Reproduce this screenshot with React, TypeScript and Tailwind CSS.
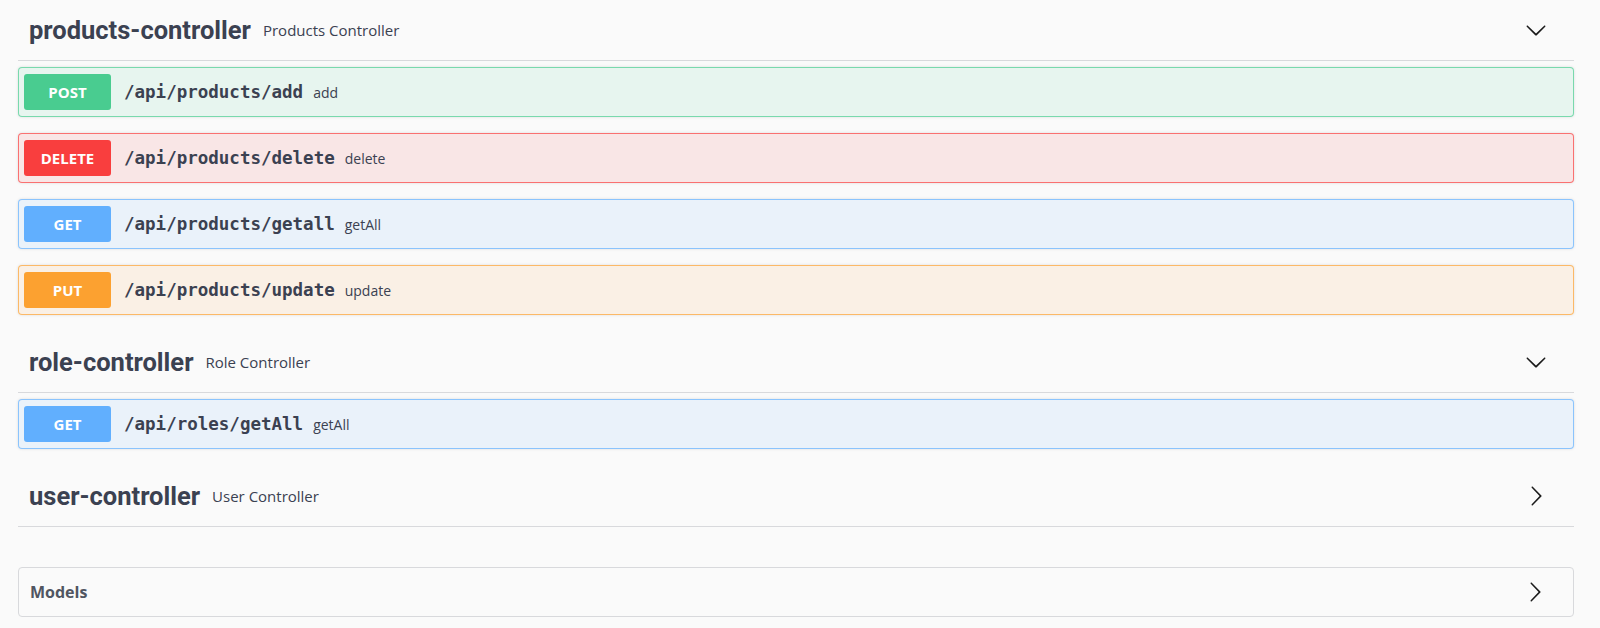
import React from 'react';

type Op = { method: 'POST' | 'DELETE' | 'GET' | 'PUT'; path: string; summary: string };

const styles = {
  POST: { wrap: 'bg-[#49cc90]/10 border-[#49cc90]/70', badge: 'bg-[#49cc90]' },
  DELETE: { wrap: 'bg-[#f93e3e]/10 border-[#f93e3e]/70', badge: 'bg-[#f93e3e]' },
  GET: { wrap: 'bg-[#61affe]/10 border-[#61affe]/70', badge: 'bg-[#61affe]' },
  PUT: { wrap: 'bg-[#fca130]/10 border-[#fca130]/70', badge: 'bg-[#fca130]' },
};

const sections: { name: string; desc: string; open: boolean; ops: Op[] }[] = [
  {
    name: 'products-controller',
    desc: 'Products Controller',
    open: true,
    ops: [
      { method: 'POST', path: '/api/products/add', summary: 'add' },
      { method: 'DELETE', path: '/api/products/delete', summary: 'delete' },
      { method: 'GET', path: '/api/products/getall', summary: 'getAll' },
      { method: 'PUT', path: '/api/products/update', summary: 'update' },
    ],
  },
  {
    name: 'role-controller',
    desc: 'Role Controller',
    open: true,
    ops: [{ method: 'GET', path: '/api/roles/getAll', summary: 'getAll' }],
  },
  { name: 'user-controller', desc: 'User Controller', open: false, ops: [] },
];

function ArrowDown() {
  return (
    <svg viewBox="0 0 20 20" className="w-[22px] h-[22px] fill-[#1b1b1b]">
      <path d="M17.418 6.109c.272-.268.709-.268.979 0s.271.701 0 .969l-7.908 7.83c-.27.268-.707.268-.979 0l-7.908-7.83c-.27-.268-.27-.701 0-.969.271-.268.709-.268.979 0L10 13.25l7.418-7.141z" />
    </svg>
  );
}

function ArrowRight() {
  return (
    <svg viewBox="0 0 20 20" className="w-[22px] h-[22px] fill-[#1b1b1b]">
      <path d="M13.25 10L6.109 2.58c-.268-.27-.268-.707 0-.979.268-.27.701-.27.969 0l7.83 7.908c.268.271.268.709 0 .979l-7.83 7.908c-.268.271-.701.27-.969 0-.268-.269-.268-.707 0-.979L13.25 10z" />
    </svg>
  );
}

function OpBlock({ op }: { op: Op }) {
  const s = styles[op.method];
  return (
    <div
      className={`h-[50px] flex items-center border rounded-[4px] pl-[5px] shadow-[0_0_3px_rgba(0,0,0,0.12)] ${s.wrap}`}
    >
      <div
        className={`w-[87px] h-[36px] rounded-[3px] flex items-center justify-center text-white text-[15px] font-bold ${s.badge}`}
        style={{ fontFamily: '"Open Sans", sans-serif' }}
      >
        {op.method}
      </div>
      <span
        className="ml-[13px] text-[17.5px] font-bold text-[#3b4151]"
        style={{ fontFamily: '"DejaVu Sans Mono", monospace' }}
      >
        {op.path}
      </span>
      <span
        className="ml-[10px] text-[14px] text-[#3b4151]"
        style={{ fontFamily: '"Open Sans", sans-serif' }}
      >
        {op.summary}
      </span>
    </div>
  );
}

export default function App() {
  return (
    <div className="min-h-screen bg-[#fafafa] pl-[18px] pr-[26px] text-[#3b4151]">
      {sections.map((sec) => (
        <div key={sec.name} className="mb-[17px]">
          {/* Tag header */}
          <div className="h-[61px] flex items-center border-b border-[#d8d9dc] pl-[11px] pr-[27px]">
            <span
              className="text-[25.5px] font-bold text-[#3b4151]"
              style={{ fontFamily: 'Roboto, sans-serif' }}
            >
              {sec.name}
            </span>
            <span
              className="ml-[12px] flex-1 text-[15px] text-[#3b4151]"
              style={{ fontFamily: '"Open Sans", sans-serif' }}
            >
              {sec.desc}
            </span>
            {sec.open ? <ArrowDown /> : <ArrowRight />}
          </div>
          {sec.ops.length > 0 && (
            <div className="mt-[6px] flex flex-col gap-[16px]">
              {sec.ops.map((op) => (
                <OpBlock key={op.path} op={op} />
              ))}
            </div>
          )}
        </div>
      ))}

      {/* Models */}
      <div className="mt-[40px] h-[50px] flex items-center border border-[#d8d9dc] rounded-[4px] pl-[11px] pr-[27px]">
        <span
          className="flex-1 text-[16px] font-bold text-[#505561]"
          style={{ fontFamily: '"Open Sans", sans-serif' }}
        >
          Models
        </span>
        <ArrowRight />
      </div>
    </div>
  );
}
